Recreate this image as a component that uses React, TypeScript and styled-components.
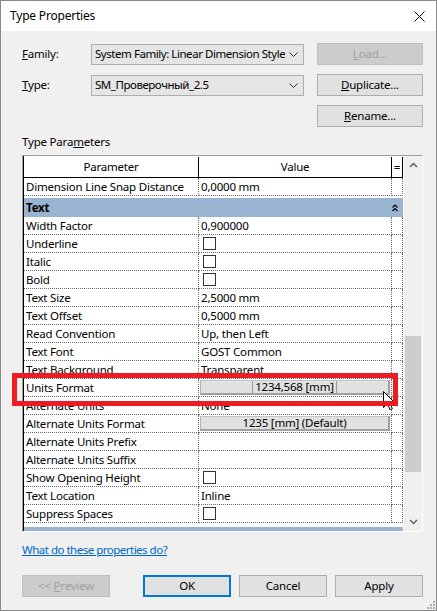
import React from 'react';
import styled, { createGlobalStyle } from 'styled-components';

const GlobalStyle = createGlobalStyle`
  html, body {
    margin: 0;
    padding: 0;
    background: #f0f0f0;
  }
  * {
    box-sizing: border-box;
  }
`;

const FONT = `"Noto Sans", "Open Sans", "Liberation Sans", sans-serif`;

const Window = styled.div`
  position: relative;
  width: 437px;
  height: 611px;
  border: 1px solid #8a8a8a;
  background: #f0f0f0;
  font-family: ${FONT};
  font-size: 11.5px;
  letter-spacing: -0.2px;
  color: #000;
  overflow: hidden;
`;

const TitleBar = styled.div`
  height: 30px;
  background: #fff;
  display: flex;
  align-items: center;
  justify-content: space-between;
  padding: 0 9px 0 9px;
`;

const TitleText = styled.span`
  font-size: 12px;
  line-height: 16px;
`;

const Body = styled.div`
  padding: 12px 13px 0 21px;
  display: flex;
  flex-direction: column;
`;

const TopGrid = styled.div`
  display: grid;
  grid-template-columns: 69px 213px 1fr;
  grid-auto-rows: 22px;
  row-gap: 9px;
  align-items: center;
`;

const FieldLabel = styled.span`
  line-height: 16px;
`;

const Key = styled.span`
  text-decoration: underline;
`;

const Combo = styled.div`
  height: 21px;
  background: #e5e5e5;
  border: 1px solid #adadad;
  display: flex;
  align-items: center;
  gap: 4px;
  padding: 0 5px 0 3px;
  line-height: 16px;
  white-space: nowrap;
`;

const ComboText = styled.span`
  flex: 1;
  min-width: 0;
  overflow: hidden;
  letter-spacing: -0.45px;
`;

const Button = styled.button<{ $primary?: boolean; $width?: number }>`
  width: ${(p) => p.$width ?? 106}px;
  height: 22px;
  justify-self: end;
  grid-column: 3;
  font-family: ${FONT};
  font-size: 11.5px;
  letter-spacing: -0.2px;
  line-height: 16px;
  color: ${(p) => (p.disabled ? '#a0a0a0' : '#000')};
  background: ${(p) => (p.disabled ? '#cccccc' : '#e1e1e1')};
  border: ${(p) => (p.$primary ? '2px solid #0078d7' : p.disabled ? '1px solid #bfbfbf' : '1px solid #adadad')};
  padding: 0;
  cursor: default;
`;

const SectionLabel = styled.div`
  margin-top: 7px;
  line-height: 16px;
`;

const Frame = styled.div`
  margin-top: 5px;
  height: 377px;
  display: flex;
  border-top: 1px solid #a0a0a0;
  border-left: 1px solid #a0a0a0;
  border-right: 1px solid #fff;
  border-bottom: 1px solid #fff;
  background: #fff;
`;

const Grid = styled.div`
  width: 380px;
  border-left: 1px solid #000;
  padding-top: 1px;
  display: flex;
  flex-direction: column;
  overflow: hidden;
`;

const COLS = '175px 193px 11px';

const HeaderRow = styled.div`
  display: grid;
  grid-template-columns: ${COLS};
  height: 21px;
  border-bottom: 1px solid #000;
`;

const HeaderCell = styled.div`
  border-right: 1px solid #000;
  display: flex;
  align-items: center;
  justify-content: center;
  line-height: 16px;
`;

const Row = styled.div`
  display: grid;
  grid-template-columns: ${COLS};
  height: 18px;
  flex: none;
`;

const Cell = styled.div`
  border-right: 1px dotted #6a6a6a;
  border-bottom: 1px dotted #6a6a6a;
  display: flex;
  align-items: center;
  padding-left: 2px;
  line-height: 16px;
  white-space: nowrap;
  overflow: hidden;
`;

const Gap = styled.div<{ $h: number }>`
  height: ${(p) => p.$h}px;
  flex: none;
`;

const GroupHeader = styled.div<{ $h?: number }>`
  height: ${(p) => p.$h ?? 19}px;
  flex: none;
  background: #99b4d1;
  display: flex;
  align-items: center;
  justify-content: space-between;
  padding: 0 5px 0 2px;
  font-weight: bold;
  line-height: 16px;
`;

const CheckBox = styled.span`
  width: 13px;
  height: 13px;
  margin-left: 2px;
  border: 1px solid #333;
  background: #fff;
`;

const ValueButton = styled.div`
  flex: 1;
  height: 15px;
  margin: 0 1px 0 -1px;
  background: #e1e1e1;
  border-top: 1px solid #c4c4c4;
  border-left: 1px solid #b4b4b4;
  border-right: 2px solid #a0a0a0;
  border-bottom: 2px solid #a0a0a0;
  display: flex;
  align-items: center;
  justify-content: center;
  line-height: 12px;
`;

const FocusText = styled.span<{ $focus?: boolean }>`
  padding: 0 2px;
  border-left: 1px solid ${(p) => (p.$focus ? '#9a9a9a' : 'transparent')};
  border-right: 1px solid ${(p) => (p.$focus ? '#9a9a9a' : 'transparent')};
`;

const Scrollbar = styled.div`
  width: 19px;
  border-left: 1px solid #fff;
  background: #f0f0f0;
  display: flex;
  flex-direction: column;
`;

const ArrowBox = styled.div`
  height: 18px;
  display: flex;
  align-items: center;
  justify-content: center;
  flex: none;
`;

const Track = styled.div`
  flex: 1;
  position: relative;
`;

const Thumb = styled.div`
  position: absolute;
  left: 1px;
  right: 1px;
  background: #cdcdcd;
`;

const HelpLink = styled.a`
  margin-top: 10px;
  align-self: flex-start;
  color: #0066cc;
  text-decoration: underline;
  line-height: 16px;
  letter-spacing: -0.5px;
`;

const Footer = styled.div`
  margin-top: 17px;
  display: flex;
  align-items: center;
  gap: 8px;
`;

const FooterSpacer = styled.div`
  flex: 1;
`;

const Highlight = styled.div`
  position: absolute;
  left: 11px;
  top: 372px;
  width: 386px;
  height: 33px;
  border: 5px solid #ed1c24;
  z-index: 3;
`;

const Pointer = styled.svg`
  position: absolute;
  left: 382px;
  top: 390px;
  z-index: 2;
`;

const Grip = styled.svg`
  position: absolute;
  right: 1px;
  bottom: 1px;
`;

type Param = {
  name: string;
  value?: string;
  check?: boolean;
  button?: string;
  focus?: boolean;
};

const params: Param[] = [
  { name: 'Width Factor', value: '0,900000' },
  { name: 'Underline', check: true },
  { name: 'Italic', check: true },
  { name: 'Bold', check: true },
  { name: 'Text Size', value: '2,5000 mm' },
  { name: 'Text Offset', value: '0,5000 mm' },
  { name: 'Read Convention', value: 'Up, then Left' },
  { name: 'Text Font', value: 'GOST Common' },
  { name: 'Text Background', value: 'Transparent' },
  { name: 'Units Format', button: '1234,568 [mm]', focus: true },
  { name: 'Alternate Units', value: 'None' },
  { name: 'Alternate Units Format', button: '1235 [mm] (Default)' },
  { name: 'Alternate Units Prefix' },
  { name: 'Alternate Units Suffix' },
  { name: 'Show Opening Height', check: true },
  { name: 'Text Location', value: 'Inline' },
  { name: 'Suppress Spaces', check: true },
];

const Chevron = ({ up }: { up?: boolean }) => (
  <svg width="9" height="6" viewBox="0 0 9 6">
    <polyline
      points={up ? '1,5 4.5,1.5 8,5' : '1,1 4.5,4.5 8,1'}
      fill="none"
      stroke="#606060"
      strokeWidth="1.5"
    />
  </svg>
);

const ComboArrow = () => (
  <svg width="9" height="5" viewBox="0 0 9 5" style={{ flex: 'none' }}>
    <polyline points="0.5,0.5 4.5,4.5 8.5,0.5" fill="none" stroke="#333" strokeWidth="1" />
  </svg>
);

const ParamRow = ({ p }: { p: Param }) => (
  <Row>
    <Cell>{p.name}</Cell>
    <Cell>
      {p.value}
      {p.check && <CheckBox />}
      {p.button && (
        <ValueButton>
          <FocusText $focus={p.focus}>{p.button}</FocusText>
        </ValueButton>
      )}
    </Cell>
    <Cell />
  </Row>
);

const App = () => {
  // scroll position of the parameter list
  const trackHeight = 339;
  const thumbTop = 162;
  const thumbHeight = 136;

  return (
    <>
      <GlobalStyle />
      <Window>
        <TitleBar>
          <TitleText>Type Properties</TitleText>
          <svg width="11" height="11" viewBox="0 0 11 11" style={{ marginRight: 2 }}>
            <path d="M0.5 0.5 L10.5 10.5 M10.5 0.5 L0.5 10.5" stroke="#000" strokeWidth="1" />
          </svg>
        </TitleBar>
        <Body>
          <TopGrid>
            <FieldLabel>
              <Key>F</Key>amily:
            </FieldLabel>
            <Combo>
              <ComboText>System Family: Linear Dimension Style</ComboText>
              <ComboArrow />
            </Combo>
            <Button disabled>
              <Key>L</Key>oad...
            </Button>
            <FieldLabel>
              <Key>T</Key>ype:
            </FieldLabel>
            <Combo>
              <ComboText>SM_Проверочный_2.5</ComboText>
              <ComboArrow />
            </Combo>
            <Button>
              <Key>D</Key>uplicate...
            </Button>
            <Button>
              <Key>R</Key>ename...
            </Button>
          </TopGrid>

          <SectionLabel>
            Type Para<Key>m</Key>eters
          </SectionLabel>

          <Frame>
            <Grid>
              <HeaderRow>
                <HeaderCell>Parameter</HeaderCell>
                <HeaderCell>Value</HeaderCell>
                <HeaderCell>=</HeaderCell>
              </HeaderRow>
              <ParamRow p={{ name: 'Dimension Line Snap Distance', value: '0,0000 mm' }} />
              <Gap $h={2} />
              <GroupHeader>
                <span>Text</span>
                <svg width="6" height="8" viewBox="0 0 6 8">
                  <polyline points="0.5,3.5 3,1 5.5,3.5" fill="none" stroke="#000" strokeWidth="1.2" />
                  <polyline points="0.5,7 3,4.5 5.5,7" fill="none" stroke="#000" strokeWidth="1.2" />
                </svg>
              </GroupHeader>
              {params.map((p) => (
                <ParamRow key={p.name} p={p} />
              ))}
              <Gap $h={4} />
              <GroupHeader $h={4} />
            </Grid>
            <Scrollbar>
              <ArrowBox>
                <Chevron up />
              </ArrowBox>
              <Track style={{ height: trackHeight }}>
                <Thumb style={{ top: thumbTop, height: thumbHeight }} />
              </Track>
              <ArrowBox>
                <Chevron />
              </ArrowBox>
            </Scrollbar>
          </Frame>

          <HelpLink href="#">What do these properties do?</HelpLink>

          <Footer>
            <Button disabled $width={88}>
              &lt;&lt; <Key>P</Key>review
            </Button>
            <FooterSpacer />
            <Button $primary $width={88}>OK</Button>
            <Button $width={88}>Cancel</Button>
            <Button $width={88}>Apply</Button>
          </Footer>
        </Body>

        <Pointer width="13" height="20" viewBox="0 0 13 20">
          <path
            d="M0.5 0.5 L0.5 16.5 L4.5 12.8 L7 18.8 L9.3 17.8 L6.9 12 L12 12 Z"
            fill="#fff"
            stroke="#000"
            strokeWidth="1"
          />
        </Pointer>
        <Highlight />
        <Grip width="10" height="10" viewBox="0 0 10 10">
          <g fill="#b0b0b0">
            <rect x="8" y="2" width="2" height="2" />
            <rect x="5" y="5" width="2" height="2" />
            <rect x="8" y="5" width="2" height="2" />
            <rect x="2" y="8" width="2" height="2" />
            <rect x="5" y="8" width="2" height="2" />
            <rect x="8" y="8" width="2" height="2" />
          </g>
        </Grip>
      </Window>
    </>
  );
};

export default App;
